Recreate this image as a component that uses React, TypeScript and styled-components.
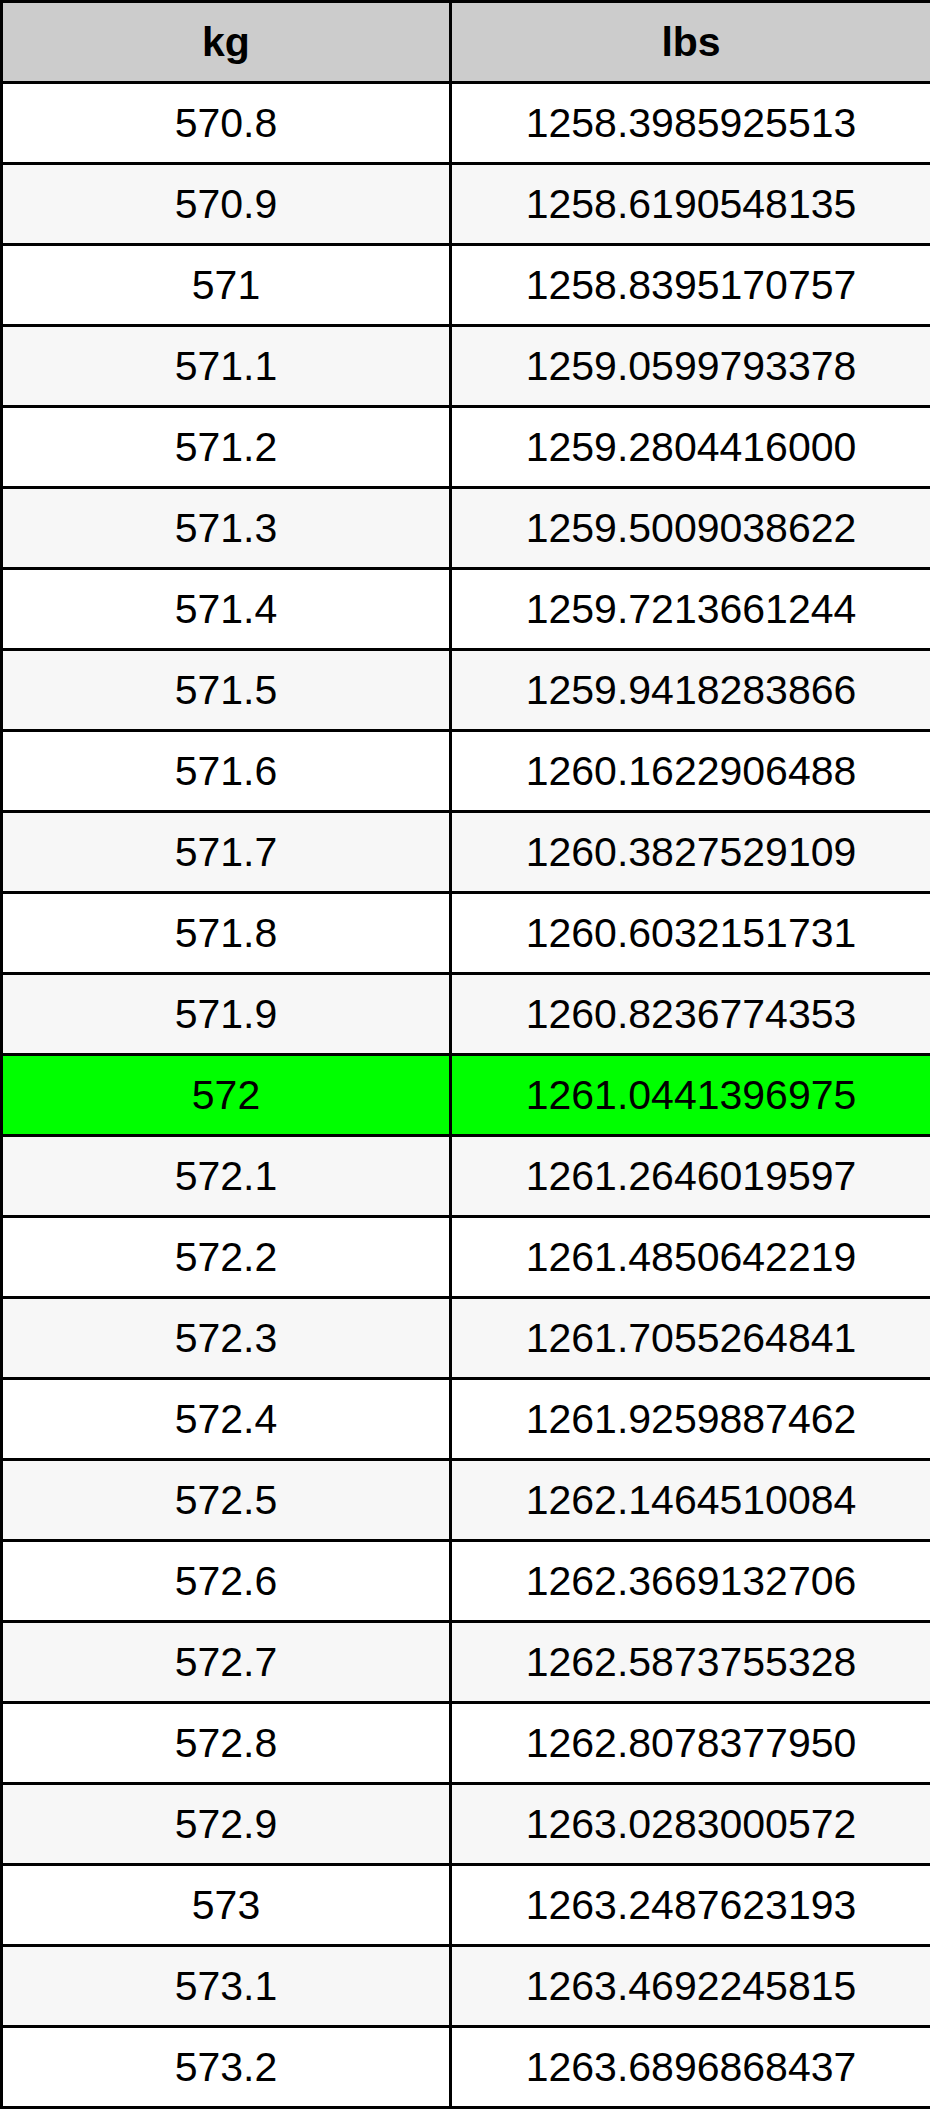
import React from "react";
import styled, { createGlobalStyle } from "styled-components";

const GlobalStyle = createGlobalStyle`
  html, body {
    margin: 0;
    padding: 0;
    background: #ffffff;
  }
  body {
    font-family: "Liberation Sans", Arial, Helvetica, sans-serif;
  }
`;

const Table = styled.table`
  width: 930px;
  border-collapse: collapse;
  table-layout: fixed;
  font-family: "Liberation Sans", Arial, Helvetica, sans-serif;
  font-size: 41px;
  color: #000;
`;

const HeadCell = styled.th`
  height: 78px;
  padding: 0;
  border: 3px solid #000;
  background: #cccccc;
  font-weight: bold;
  text-align: center;
  vertical-align: middle;
`;

const Row = styled.tr<{ $tone: "plain" | "alt" | "hit" }>`
  background: ${(p) =>
    p.$tone === "hit" ? "#00ff00" : p.$tone === "alt" ? "#f7f7f7" : "#ffffff"};
`;

const Cell = styled.td`
  height: 78px;
  padding: 0;
  border: 3px solid #000;
  text-align: center;
  vertical-align: middle;
  font-weight: normal;
`;

const rows: [string, string][] = [
  ["570.8", "1258.3985925513"],
  ["570.9", "1258.6190548135"],
  ["571", "1258.8395170757"],
  ["571.1", "1259.0599793378"],
  ["571.2", "1259.2804416000"],
  ["571.3", "1259.5009038622"],
  ["571.4", "1259.7213661244"],
  ["571.5", "1259.9418283866"],
  ["571.6", "1260.1622906488"],
  ["571.7", "1260.3827529109"],
  ["571.8", "1260.6032151731"],
  ["571.9", "1260.8236774353"],
  ["572", "1261.0441396975"],
  ["572.1", "1261.2646019597"],
  ["572.2", "1261.4850642219"],
  ["572.3", "1261.7055264841"],
  ["572.4", "1261.9259887462"],
  ["572.5", "1262.1464510084"],
  ["572.6", "1262.3669132706"],
  ["572.7", "1262.5873755328"],
  ["572.8", "1262.8078377950"],
  ["572.9", "1263.0283000572"],
  ["573", "1263.2487623193"],
  ["573.1", "1263.4692245815"],
  ["573.2", "1263.6896868437"],
];

export default function App() {
  return (
    <>
      <GlobalStyle />
      <Table>
        <colgroup>
          <col style={{ width: 449 }} />
          <col style={{ width: 481 }} />
        </colgroup>
        <thead>
          <tr>
            <HeadCell>kg</HeadCell>
            <HeadCell>lbs</HeadCell>
          </tr>
        </thead>
        <tbody>
          {rows.map(([kg, lbs], i) => (
            <Row key={kg} $tone={kg === "572" ? "hit" : i % 2 ? "alt" : "plain"}>
              <Cell>{kg}</Cell>
              <Cell>{lbs}</Cell>
            </Row>
          ))}
        </tbody>
      </Table>
    </>
  );
}
